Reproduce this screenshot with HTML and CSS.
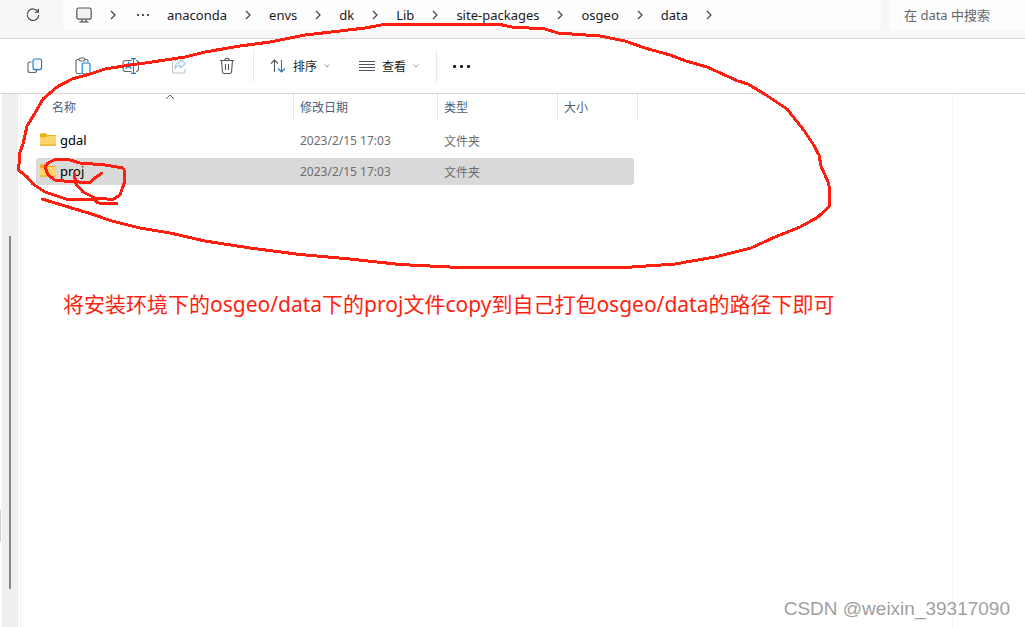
FILE: index.html
```
<!DOCTYPE html>
<html lang="zh-CN">
<head>
  <meta charset="UTF-8" />
  <title>data</title>
  <meta name="viewport" content="width=device-width, initial-scale=1.0"/>
  <link rel="stylesheet" href="styles.css">
</head>
<body>

  <header class="topbar">
    <button type="button" class="refresh" aria-label="刷新">
      <svg width="14" height="14" viewBox="0 0 14 14" fill="none" stroke="#444" stroke-width="1.1"><path d="M11.9 3.6A5.8 5.8 0 1 0 12.8 7M12.4 .8v3.4H9"/></svg>
    </button>
    <nav class="address" aria-label="路径">
      <svg class="monitor" width="16" height="16" viewBox="0 0 16 16" fill="none" stroke="#555" stroke-width="1.2"><rect x=".8" y="1" width="14.4" height="11.2" rx="2" fill="#f1f1f1"/><path d="M6 12.2v2.4M10 12.2v2.4M3.5 14.8h9"/></svg>
      <svg class="sep" viewBox="0 0 6 10"><path d="M1 1l4 4-4 4"/></svg>
      <button type="button" class="dots crumb-dots" aria-label="更多路径"><i></i><i></i><i></i></button>
      <a href="#">anaconda</a>
      <svg class="sep" viewBox="0 0 6 10"><path d="M1 1l4 4-4 4"/></svg>
      <a href="#">envs</a>
      <svg class="sep" viewBox="0 0 6 10"><path d="M1 1l4 4-4 4"/></svg>
      <a href="#">dk</a>
      <svg class="sep" viewBox="0 0 6 10"><path d="M1 1l4 4-4 4"/></svg>
      <a href="#">Lib</a>
      <svg class="sep" viewBox="0 0 6 10"><path d="M1 1l4 4-4 4"/></svg>
      <a href="#">site-packages</a>
      <svg class="sep" viewBox="0 0 6 10"><path d="M1 1l4 4-4 4"/></svg>
      <a href="#">osgeo</a>
      <svg class="sep" viewBox="0 0 6 10"><path d="M1 1l4 4-4 4"/></svg>
      <a href="#">data</a>
      <svg class="sep" viewBox="0 0 6 10"><path d="M1 1l4 4-4 4"/></svg>
    </nav>
    <input type="search" class="search" placeholder="在 data 中搜索" aria-label="在 data 中搜索">
  </header>

  <div class="toolbar">
    <button type="button" class="tool" aria-label="复制">
      <svg width="16" height="16" viewBox="0 0 16 16" fill="none" stroke-width="1.1"><path d="M4.5 4H3a2 2 0 0 0-2 2v6.5a2 2 0 0 0 2 2h4.5a2 2 0 0 0 2-2V12" stroke="#666"/><rect x="6" y="1" width="8.6" height="10.6" rx="2" stroke="#1979ca" fill="#f3f8fd"/></svg>
    </button>
    <button type="button" class="tool" aria-label="粘贴">
      <svg width="16" height="18" viewBox="0 0 16 18" fill="none" stroke-width="1.1"><path d="M6.5 16.5h-4a1.5 1.5 0 0 1-1.5-1.5V4a1.5 1.5 0 0 1 1.5-1.5H4M10 2.5h1.5A1.5 1.5 0 0 1 13 4v1" stroke="#666"/><rect x="4" y="1" width="6" height="3" rx="1.5" stroke="#666"/><rect x="7.2" y="6" width="7.8" height="11" rx="1.5" stroke="#1979ca" fill="#f3f8fd"/></svg>
    </button>
    <button type="button" class="tool" aria-label="重命名">
      <svg width="18" height="16" viewBox="0 0 18 16" fill="none" stroke-width="1.1"><path d="M9.5 2.5h-6a2.5 2.5 0 0 0-2.5 2.5v6a2.5 2.5 0 0 0 2.5 2.5h6M14 2.5a2.5 2.5 0 0 1 2.5 2.5v6a2.5 2.5 0 0 1-2.5 2.5" stroke="#666"/><path d="M11.5.5v15M9 .6h5M9 15.4h5M3.8 11l2.7-6.5L9.2 11M4.7 9h3.6" stroke="#1979ca"/></svg>
    </button>
    <button type="button" class="tool" aria-label="共享" disabled>
      <svg width="16" height="16" viewBox="0 0 16 16" fill="none" stroke-width="1.1"><path d="M5.5 2.5h-2a2 2 0 0 0-2 2v8.5a2 2 0 0 0 2 2h8.5a2 2 0 0 0 2-2v-2" stroke="#c4c4c4"/><path d="M9.5 1.2l5 4.3-5 4.3V7.5C7 7.4 5.5 8.3 4 10.5c.2-3.8 2-6.3 5.5-6.7z" stroke="#a3cbec" fill="#f1f8fe"/></svg>
    </button>
    <button type="button" class="tool" aria-label="删除">
      <svg width="16" height="18" viewBox="0 0 16 18" fill="none" stroke="#555" stroke-width="1.1"><path d="M1 3.5h14M5.8 3.5a2.2 2.2 0 0 1 4.4 0M2.5 3.5l1 11.5a1.6 1.6 0 0 0 1.6 1.5h5.8a1.6 1.6 0 0 0 1.6-1.5l1-11.5M6.5 7v6M9.5 7v6"/></svg>
    </button>
    <span class="divider"></span>
    <button type="button" class="menu">
      <svg width="16" height="14" viewBox="0 0 16 14" fill="none" stroke-width="1.1"><path d="M4.5 13V1M1 4.5L4.5 1 8 4.5" stroke="#555"/><path d="M11.5 1v12M8 9.5l3.5 3.5L15 9.5" stroke="#1979ca"/></svg>
      排序
      <svg class="down" viewBox="0 0 6 4"><path d="M.5.5L3 3 5.5.5"/></svg>
    </button>
    <button type="button" class="menu view">
      <svg width="16" height="12" viewBox="0 0 16 12" stroke="#555"><path d="M0 1.5h16M0 4.5h16M0 7.5h16M0 10.5h16"/></svg>
      查看
      <svg class="down" viewBox="0 0 6 4"><path d="M.5.5L3 3 5.5.5"/></svg>
    </button>
    <span class="divider"></span>
    <button type="button" class="dots more" aria-label="更多"><i></i><i></i><i></i></button>
  </div>

  <div class="content">
    <aside class="tree">
      <span class="grip"></span>
      <div class="track"><span class="thumb"></span></div>
    </aside>

    <main class="files">
      <table class="list">
        <colgroup>
          <col class="col-name"><col class="col-date"><col class="col-type"><col class="col-size">
        </colgroup>
        <thead>
          <tr>
            <th><span class="head">名称<svg class="sorted" viewBox="0 0 10 6"><path d="M1 5l4-4 4 4"/></svg></span></th>
            <th><span class="head">修改日期</span></th>
            <th><span class="head">类型</span></th>
            <th><span class="head last">大小</span></th>
          </tr>
        </thead>
        <tbody>
          <tr>
            <td class="name">
              <svg class="folder" viewBox="0 0 16 14"><path d="M0 1.5A1.2 1.2 0 0 1 1.2.3h4.3L7.3 2h7.5A1.2 1.2 0 0 1 16 3.2V6H0z" fill="#eeae10"/><path d="M0 4.2h6L7.8 3H16v8.8a1.2 1.2 0 0 1-1.2 1.2H1.2A1.2 1.2 0 0 1 0 11.8z" fill="#ffd66b"/><path d="M0 11.3v.5A1.2 1.2 0 0 0 1.2 13h13.6a1.2 1.2 0 0 0 1.2-1.2v-.5z" fill="#f0bb3a"/></svg>gdal
            </td>
            <td>2023/2/15 17:03</td>
            <td>文件夹</td>
            <td></td>
          </tr>
          <tr class="selected">
            <td class="name">
              <svg class="folder" viewBox="0 0 16 14"><path d="M0 1.5A1.2 1.2 0 0 1 1.2.3h4.3L7.3 2h7.5A1.2 1.2 0 0 1 16 3.2V6H0z" fill="#eeae10"/><path d="M0 4.2h6L7.8 3H16v8.8a1.2 1.2 0 0 1-1.2 1.2H1.2A1.2 1.2 0 0 1 0 11.8z" fill="#ffd66b"/><path d="M0 11.3v.5A1.2 1.2 0 0 0 1.2 13h13.6a1.2 1.2 0 0 0 1.2-1.2v-.5z" fill="#f0bb3a"/></svg>proj
            </td>
            <td>2023/2/15 17:03</td>
            <td>文件夹</td>
            <td></td>
          </tr>
        </tbody>
      </table>
      <p class="note">将安装环境下的osgeo/data下的proj文件copy到自己打包osgeo/data的路径下即可</p>
    </main>

    <aside class="details"></aside>
  </div>

  <!-- red pen marks -->
  <svg class="ink" width="840" height="280" viewBox="0 0 840 280">
    <path d="M42 199L65 206 90 213.5 112 221 140 228 170 233 205 241 250 248 300 254.5 350 259 400 264.5 450 267 632 267 675 264 715 257 751 248 775 237 800 227 818 217 829.5 206 829.5 188 828 182 821 166 819 155 813 144 803 129 787 109 778 103 766 95 748 84 738 81 707 67 686 61 670 55 645 48 625 41 600 36 558 33 545 29 512 27 500 24.5 384 24.5 365 28 340 31 305 35 280 40 270 42 240 46 205 52 185 57 152 62 130 65 105 69 90 74 72 79 57 87 43 99 35 113 27 126 23 144 20 152 18.5 170 27 177 33 184 45 192 66 199 94 199 98 203 117 203.5"/>
    <path d="M102 173L95 178 90 182.5 68 181.5 55 180 48 175 45 167 48 163 55 159.5 70 160 80 163 105 165 123 168 125 172 124.5 182 120 195 113 199.5 95 198 83 192 76 184 74 173"/>
  </svg>

  <div class="watermark">CSDN @weixin_39317090</div>

</body>
</html>
```

FILE: styles.css
```
* {
  box-sizing: border-box;
}

body {
  margin: 0;
  min-height: 100vh;
  display: flex;
  flex-direction: column;
  position: relative;
  background: #fff;
  font-family: "Noto Sans", "Noto Sans CJK SC", sans-serif;
  font-size: 13px;
  color: #1b1b1b;
}

button {
  border: none;
  padding: 0;
  background: none;
  font: inherit;
  color: inherit;
  display: flex;
  align-items: center;
  justify-content: center;
}

svg {
  flex: none;
}

/* address row */
.topbar {
  display: flex;
  gap: 8px;
  height: 39px;
  padding-bottom: 7px;
  background: #f7f7f7;
  border-bottom: 1px solid #dcdcdc;
}

.refresh {
  width: 55px;
  padding: 0 0 2px 11px;
}

.address {
  flex: 1;
  display: flex;
  align-items: center;
  gap: 18px;
  padding: 0 0 2px 13px;
  background: #fdfdfd;
  border-radius: 0 0 4px 4px;
}

.address a {
  color: #1b1b1b;
  text-decoration: none;
}

.sep {
  width: 6px;
  height: 10px;
  fill: none;
  stroke: #444;
  stroke-width: 1.2;
}

.dots {
  gap: 3px;
}

.crumb-dots {
  padding-left: 3px;
}

.dots i {
  width: 2px;
  height: 2px;
  border-radius: 1px;
  background: #1b1b1b;
}

.search {
  width: 136px;
  padding: 0 0 2px 15px;
  border: none;
  border-radius: 0 0 0 4px;
  background: #fdfdfd;
  font: inherit;
}

.search::placeholder {
  color: #666;
  opacity: 1;
}

/* command row */
.toolbar {
  display: flex;
  align-items: center;
  height: 55px;
  padding-left: 11px;
  border-bottom: 1px solid #d6d6d6;
}

.tool {
  width: 48px;
  height: 32px;
}

.divider {
  width: 1px;
  height: 32px;
  margin: 0 16px 0 2px;
  background: #e8e8e8;
}

.menu {
  gap: 7px;
  font-size: 12px;
}

.view {
  margin: 0 15px 0 29px;
}

.down {
  width: 6px;
  height: 4px;
  fill: none;
  stroke: #999;
}

.more {
  gap: 4px;
}

.more i {
  width: 3px;
  height: 3px;
}

/* panes */
.content {
  flex: 1;
  display: flex;
}

.tree {
  width: 21px;
  display: flex;
  align-items: flex-end;
  border-right: 1px solid #f3f3f3;
}

.grip {
  width: 1px;
  height: 32px;
  margin: 0 1px 85px 0;
  background: #d0d0d0;
}

.track {
  width: 16px;
  align-self: stretch;
  display: flex;
  justify-content: center;
  padding: 142px 0 38px;
  background: #efefef;
}

.thumb {
  width: 2px;
  background: #868686;
}

.files {
  flex: 1;
  padding-left: 15px;
}

.details {
  width: 73px;
  border-left: 1px solid #f3f3f3;
}

.list {
  table-layout: fixed;
  width: 598px;
  border-spacing: 0;
  font-size: 12px;
  color: #6d6d6d;
}

.col-name {
  width: 257px;
}

.col-date {
  width: 144px;
}

.col-type {
  width: 120px;
}

.list th {
  padding: 0 0 6px;
  font-weight: normal;
  text-align: left;
  color: #4c607a;
}

.head {
  position: relative;
  display: block;
  height: 27px;
  line-height: 27px;
  padding-left: 6px;
  border-left: 1px solid #e5e5e5;
}

th:first-child .head {
  padding-left: 16px;
  border-left: none;
}

.last {
  margin-right: -4px;
  border-right: 1px solid #e5e5e5;
}

.sorted {
  position: absolute;
  top: 0;
  left: 50%;
  width: 10px;
  height: 6px;
  fill: none;
  stroke: #666;
}

.list td {
  height: 31px;
  padding: 0 0 0 7px;
  border-bottom: 4px solid transparent;
  background-clip: padding-box;
}

.list .name {
  padding: 0 0 1px 4px;
  font-size: 13px;
  color: #000;
}

.folder {
  width: 16px;
  height: 14px;
  margin-right: 4px;
  vertical-align: -2px;
}

.selected td {
  background-color: #d9d9d9;
}

.selected td:first-child {
  border-radius: 2px 0 0 6px;
}

.selected td:last-child {
  border-radius: 0 2px 6px 0;
}

.note {
  margin: 100px 0 0 27px;
  font-size: 21px;
  line-height: 30px;
  color: #ff1f10;
}

.ink {
  position: absolute;
  top: 0;
  left: 0;
  fill: none;
  stroke: #ff1f10;
  stroke-width: 3;
  stroke-linecap: round;
  stroke-linejoin: round;
  shape-rendering: crispEdges;
  pointer-events: none;
}

.watermark {
  position: absolute;
  right: 15px;
  bottom: 7px;
  font-family: "Liberation Sans", sans-serif;
  font-size: 19px;
  line-height: 23px;
  color: #a0a0a0;
  text-shadow: 1px 1px 0 #fff;
}
```
